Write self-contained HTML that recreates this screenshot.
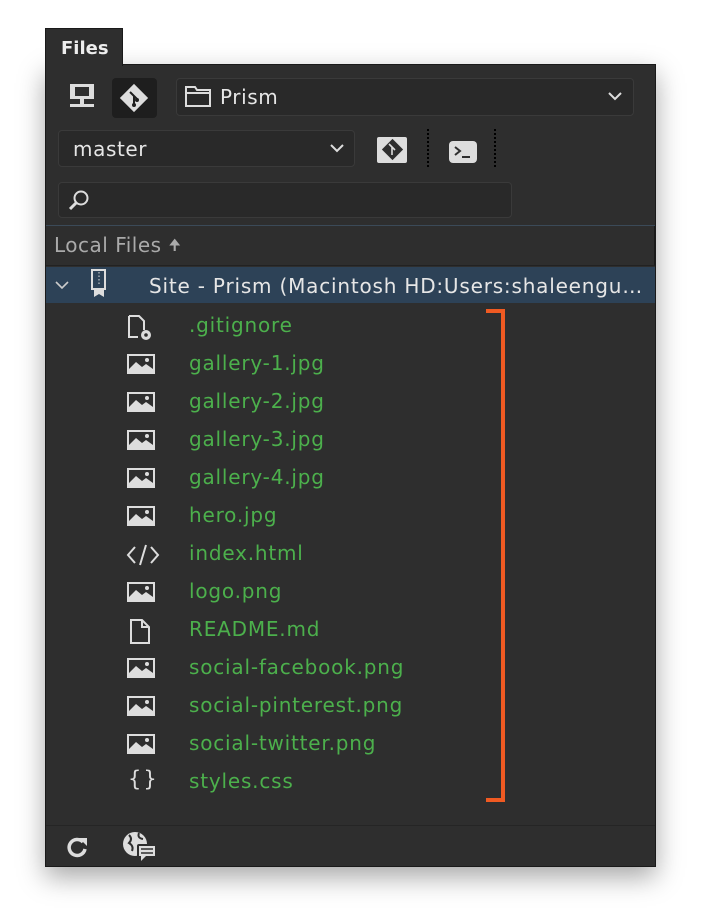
<!DOCTYPE html>
<html><head><style>
body{margin:0;width:702px;height:914px;background:#fff;font-family:"DejaVu Sans",sans-serif;position:relative;overflow:hidden}
.abs{position:absolute}
.panel{left:45px;top:64px;width:611px;height:803px;background:#2e2e2e;border:1px solid #1a1a1a;box-shadow:0 10px 25px rgba(0,0,0,.35);box-sizing:border-box}
.tab{left:45px;top:28px;width:78px;height:38px;background:#2e2e2e;border:1px solid #1a1a1a;border-bottom:none;box-sizing:border-box;color:#eee;font-weight:bold;font-size:18px;padding:9px 0 0 15px}
.box{background:#292929;border:1px solid #3a3a3a;border-radius:4px;box-sizing:border-box;color:#e6e6e6;font-size:20px;letter-spacing:.6px}
.name{position:absolute;left:143px;top:7px;color:#4cb04c;font-size:20px;letter-spacing:.8px}
.ic{position:absolute;left:80px;top:8px}
</style></head><body>
<div class="abs panel"></div>
<div class="abs tab">Files</div>
<svg class="abs" style="left:67px;top:82px" width="30" height="30" viewBox="0 0 30 30"><rect x="3" y="2" width="24" height="15" fill="#ddd"/><rect x="8" y="5" width="14" height="9" fill="#2e2e2e"/><rect x="13" y="17" width="4" height="5" fill="#ddd"/><rect x="3" y="22" width="24" height="3" fill="#ddd"/></svg>
<div class="abs" style="left:112px;top:78px;width:45px;height:40px;background:#1e1e1e;border-radius:4px"></div>
<svg class="abs" style="left:119px;top:83px" width="30" height="30" viewBox="0 0 30 30"><rect x="5" y="5" width="20" height="20" transform="rotate(45 15 15)" fill="#ddd"/><path d="M11 9 L18 16 M15 13 L15 22" stroke="#1e1e1e" stroke-width="2"/><circle cx="15" cy="22" r="2" fill="#1e1e1e"/><circle cx="18" cy="17" r="2" fill="#1e1e1e"/></svg>
<div class="abs box" style="left:176px;top:78px;width:458px;height:38px;padding:6px 0 0 43px">Prism</div>
<svg class="abs" style="left:184px;top:84px" width="28" height="24" viewBox="0 0 28 24"><path d="M2 3h9l2 3h13v16H2z" fill="none" stroke="#ddd" stroke-width="2"/><path d="M2 9h24" stroke="#ddd" stroke-width="2"/></svg>
<svg class="abs" style="left:607px;top:90px" width="16" height="12"><path d="M2 3l6 6 6-6" fill="none" stroke="#ddd" stroke-width="2"/></svg>
<div class="abs box" style="left:58px;top:130px;width:297px;height:37px;padding:6px 0 0 14px">master</div>
<svg class="abs" style="left:329px;top:142px" width="16" height="12"><path d="M2 3l6 6 6-6" fill="none" stroke="#ddd" stroke-width="2"/></svg>
<div class="abs" style="left:377px;top:137px;width:30px;height:26px;background:#ddd;border-radius:2px"></div>
<svg class="abs" style="left:377px;top:137px" width="30" height="26" viewBox="0 0 30 26"><rect x="8" y="5" width="15" height="15" transform="rotate(45 15.5 12.5)" fill="#2e2e2e"/><path d="M12 7l6 6M15 10v8" stroke="#ddd" stroke-width="1.6"/></svg>
<div class="abs" style="left:427px;top:129px;height:38px;border-left:2px dotted #000"></div>
<div class="abs" style="left:449px;top:141px;width:28px;height:22px;background:#ddd;border-radius:4px"></div>
<svg class="abs" style="left:449px;top:141px" width="28" height="22"><path d="M6 6l5 4-5 4M13 16h8" fill="none" stroke="#2e2e2e" stroke-width="2"/></svg>
<div class="abs" style="left:494px;top:129px;height:38px;border-left:2px dotted #000"></div>
<div class="abs box" style="left:58px;top:182px;width:454px;height:36px"></div>
<svg class="abs" style="left:66px;top:188px" width="26" height="26"><circle cx="15" cy="10" r="6.5" fill="none" stroke="#ddd" stroke-width="2"/><path d="M10 15l-6 6" stroke="#ddd" stroke-width="3"/></svg>
<div class="abs" style="left:46px;top:225px;width:609px;height:1px;background:#3b4a58"></div>
<div class="abs" style="left:46px;top:226px;width:608px;height:39px;border-right:1px solid #1a1a1a;border-bottom:1px solid #222"></div>
<div class="abs" style="left:54px;top:233px;color:#aaa;font-size:20px;letter-spacing:.5px">Local Files <span style="font-size:15px;vertical-align:2px">&#129033;</span></div>
<div class="abs" style="left:46px;top:267px;width:609px;height:36px;background:#2d4257"></div>
<svg class="abs" style="left:54px;top:279px" width="16" height="12"><path d="M2 3l6 6 6-6" fill="none" stroke="#ccc" stroke-width="1.6"/></svg>
<svg class="abs" style="left:88px;top:268px" width="24" height="32"><rect x="3" y="1" width="15" height="21" fill="#ddd"/><rect x="5" y="3" width="11" height="17" fill="#2d4257"/><path d="M11 4v14" stroke="#ddd" stroke-dasharray="1.5 2"/><path d="M6 22v7l5-3 5 3v-7z" fill="#ddd"/></svg>
<div class="abs" style="left:149px;top:274px;color:#e6e6e6;font-size:20px;letter-spacing:.8px;white-space:nowrap">Site - Prism (Macintosh HD:Users:shaleengu…</div>
<div class="abs" style="left:46px;top:306px;width:609px">
<div style="position:relative;height:38px"><svg class="ic" width="32" height="30"><path d="M3 2h10l5 5v9M3 2v21h9" fill="none" stroke="#ddd" stroke-width="2"/><circle cx="20" cy="21" r="5" fill="#ddd"/><circle cx="20" cy="21" r="1.8" fill="#2e2e2e"/></svg><span class="name">.gitignore</span></div>
<div style="position:relative;height:38px"><svg class="ic" width="30" height="24" viewBox="0 0 30 24"><rect x="1" y="2" width="28" height="20" fill="#ddd"/><rect x="3" y="4" width="24" height="13" fill="#2e2e2e"/><path d="M3 17l7-7 6 5 4-3 7 5z" fill="#ddd"/><circle cx="21" cy="8" r="2" fill="#ddd"/></svg><span class="name">gallery-1.jpg</span></div>
<div style="position:relative;height:38px"><svg class="ic" width="30" height="24" viewBox="0 0 30 24"><rect x="1" y="2" width="28" height="20" fill="#ddd"/><rect x="3" y="4" width="24" height="13" fill="#2e2e2e"/><path d="M3 17l7-7 6 5 4-3 7 5z" fill="#ddd"/><circle cx="21" cy="8" r="2" fill="#ddd"/></svg><span class="name">gallery-2.jpg</span></div>
<div style="position:relative;height:38px"><svg class="ic" width="30" height="24" viewBox="0 0 30 24"><rect x="1" y="2" width="28" height="20" fill="#ddd"/><rect x="3" y="4" width="24" height="13" fill="#2e2e2e"/><path d="M3 17l7-7 6 5 4-3 7 5z" fill="#ddd"/><circle cx="21" cy="8" r="2" fill="#ddd"/></svg><span class="name">gallery-3.jpg</span></div>
<div style="position:relative;height:38px"><svg class="ic" width="30" height="24" viewBox="0 0 30 24"><rect x="1" y="2" width="28" height="20" fill="#ddd"/><rect x="3" y="4" width="24" height="13" fill="#2e2e2e"/><path d="M3 17l7-7 6 5 4-3 7 5z" fill="#ddd"/><circle cx="21" cy="8" r="2" fill="#ddd"/></svg><span class="name">gallery-4.jpg</span></div>
<div style="position:relative;height:38px"><svg class="ic" width="30" height="24" viewBox="0 0 30 24"><rect x="1" y="2" width="28" height="20" fill="#ddd"/><rect x="3" y="4" width="24" height="13" fill="#2e2e2e"/><path d="M3 17l7-7 6 5 4-3 7 5z" fill="#ddd"/><circle cx="21" cy="8" r="2" fill="#ddd"/></svg><span class="name">hero.jpg</span></div>
<div style="position:relative;height:38px"><svg class="ic" width="34" height="26"><path d="M9 5l-7 8 7 8M25 5l7 8-7 8M20 3l-6 20" fill="none" stroke="#ddd" stroke-width="2"/></svg><span class="name">index.html</span></div>
<div style="position:relative;height:38px"><svg class="ic" width="30" height="24" viewBox="0 0 30 24"><rect x="1" y="2" width="28" height="20" fill="#ddd"/><rect x="3" y="4" width="24" height="13" fill="#2e2e2e"/><path d="M3 17l7-7 6 5 4-3 7 5z" fill="#ddd"/><circle cx="21" cy="8" r="2" fill="#ddd"/></svg><span class="name">logo.png</span></div>
<div style="position:relative;height:38px"><svg class="ic" width="30" height="28"><path d="M5 2h11l7 7v16H5z M16 2v7h7" fill="none" stroke="#ddd" stroke-width="2"/></svg><span class="name">README.md</span></div>
<div style="position:relative;height:38px"><svg class="ic" width="30" height="24" viewBox="0 0 30 24"><rect x="1" y="2" width="28" height="20" fill="#ddd"/><rect x="3" y="4" width="24" height="13" fill="#2e2e2e"/><path d="M3 17l7-7 6 5 4-3 7 5z" fill="#ddd"/><circle cx="21" cy="8" r="2" fill="#ddd"/></svg><span class="name">social-facebook.png</span></div>
<div style="position:relative;height:38px"><svg class="ic" width="30" height="24" viewBox="0 0 30 24"><rect x="1" y="2" width="28" height="20" fill="#ddd"/><rect x="3" y="4" width="24" height="13" fill="#2e2e2e"/><path d="M3 17l7-7 6 5 4-3 7 5z" fill="#ddd"/><circle cx="21" cy="8" r="2" fill="#ddd"/></svg><span class="name">social-pinterest.png</span></div>
<div style="position:relative;height:38px"><svg class="ic" width="30" height="24" viewBox="0 0 30 24"><rect x="1" y="2" width="28" height="20" fill="#ddd"/><rect x="3" y="4" width="24" height="13" fill="#2e2e2e"/><path d="M3 17l7-7 6 5 4-3 7 5z" fill="#ddd"/><circle cx="21" cy="8" r="2" fill="#ddd"/></svg><span class="name">social-twitter.png</span></div>
<div style="position:relative;height:38px"><span style="position:absolute;left:82px;top:5px;color:#ddd;font-size:21px;letter-spacing:2px">{}</span><span class="name">styles.css</span></div>
</div>
<div class="abs" style="left:486px;top:309px;width:15px;height:485px;border:4px solid #f05a22;border-left:none;"></div>
<div class="abs" style="left:46px;top:825px;width:609px;height:1px;background:#252525"></div>
<svg class="abs" style="left:63px;top:834px" width="28" height="28"><path d="M20 8a8 8 0 1 0 2 7" fill="none" stroke="#ddd" stroke-width="3.5"/><path d="M16 4h8v8z" fill="#ddd"/></svg>
<svg class="abs" style="left:121px;top:829px" width="40" height="36"><circle cx="14" cy="15" r="12" fill="#ddd"/><path d="M8 6q4 4 0 8q5 3 3 8M18 4q-2 5 4 6" fill="none" stroke="#2e2e2e" stroke-width="2"/><rect x="16" y="15" width="20" height="14" rx="2" fill="#2e2e2e"/><rect x="18" y="17" width="16" height="10" fill="#ddd"/><path d="M20 20h12M20 24h12" stroke="#2e2e2e" stroke-width="1.5"/><path d="M20 27l0 5 5-5z" fill="#ddd"/></svg>
</body></html>
